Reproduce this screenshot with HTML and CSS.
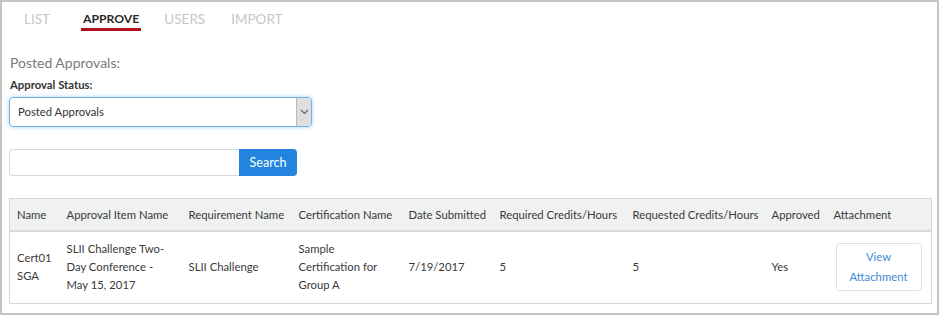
FILE: index.html
```html
<!DOCTYPE html>
<html>
<head>
<meta charset="utf-8">
<link rel="stylesheet" href="styles.css">
</head>
<body>
<div class="frame">
  <nav class="tabs">
    <span class="tab tab-first">LIST</span>
    <span class="tab active">APPROVE</span>
    <span class="tab">USERS</span>
    <span class="tab">IMPORT</span>
  </nav>
  <h2 class="title">Posted Approvals:</h2>
  <label class="label">Approval Status:</label>
  <div class="select">
    <span class="select-text">Posted Approvals</span>
    <span class="select-arrow"><svg width="9" height="6" viewBox="0 0 9 6"><path d="M1 1 L4.5 4.5 L8 1" fill="none" stroke="#666" stroke-width="1.2"/></svg></span>
  </div>
  <div class="search">
    <div class="search-input"></div>
    <div class="search-btn">Search</div>
  </div>
  <table class="grid">
    <colgroup>
      <col style="width:50px"><col style="width:122px"><col style="width:110px"><col style="width:110px"><col style="width:91px"><col style="width:133px"><col style="width:139px"><col style="width:62px"><col style="width:105px">
    </colgroup>
    <thead>
      <tr>
        <th>Name</th><th>Approval Item Name</th><th>Requirement Name</th><th>Certification Name</th><th>Date Submitted</th><th>Required Credits/Hours</th><th>Requested Credits/Hours</th><th>Approved</th><th>Attachment</th>
      </tr>
    </thead>
    <tbody>
      <tr>
        <td>Cert01 SGA</td>
        <td>SLII Challenge Two-Day Conference - May 15, 2017</td>
        <td>SLII Challenge</td>
        <td>Sample Certification for Group A</td>
        <td>7/19/2017</td>
        <td>5</td>
        <td>5</td>
        <td>Yes</td>
        <td><div class="attach">View Attachment</div></td>
      </tr>
    </tbody>
  </table>
</div>
</body>
</html>
```
FILE: styles.css
```css
* { box-sizing: border-box; }
body {
  margin: 0;
  font-family: Lato, "Open Sans", sans-serif;
  color: #333;
  background: #fff;
}
.frame {
  width: 939px;
  height: 315px;
  border: 2px solid #c4c4c4;
  padding: 8px 7px 0 7px;
}
.tabs {
  display: flex;
  padding-left: 15px;
  height: 21px;
}
.tab {
  font-size: 13.5px;
  line-height: 18px;
  color: #c7c7c7;
  margin-right: 26px;
  height: 21px;
}
.tab-first {
  margin-right: 31px;
}
.tab.active {
  font-size: 12.2px;
  color: #2a2a2a;
  font-weight: 700;
  border-bottom: 3px solid #b0101c;
  padding: 0 2px;
  margin-right: 23px;
}
.title {
  margin: 23px 0 0 1px;
  font-size: 14px;
  font-weight: 400;
  color: #7a7a7a;
  line-height: 18px;
}
.label {
  display: block;
  margin: 6px 0 0 1px;
  font-size: 11.3px;
  font-weight: 700;
  color: #333;
  line-height: 14px;
}
.select {
  margin-top: 5px;
  width: 303px;
  height: 30px;
  border: 1px solid #72b1e6;
  border-radius: 4px;
  box-shadow: 0 0 4px rgba(102, 175, 233, 0.6);
  display: flex;
  align-items: stretch;
  overflow: hidden;
}
.select-text {
  flex: 1;
  font-size: 11.3px;
  line-height: 28px;
  padding-left: 8px;
  color: #333;
}
.select-arrow {
  width: 15px;
  background: #dedede;
  border-left: 1px solid #bbb;
  display: flex;
  align-items: center;
  justify-content: center;
}
.search {
  margin-top: 22px;
  display: flex;
  height: 27px;
}
.search-input {
  width: 230px;
  border: 1px solid #d8d8d8;
  border-right: none;
  border-radius: 4px 0 0 4px;
}
.search-btn {
  width: 58px;
  background: #2284de;
  color: #fff;
  font-size: 12.5px;
  line-height: 27px;
  text-align: center;
  border-radius: 0 4px 4px 0;
}
.grid {
  margin-top: 22px;
  border-collapse: collapse;
  table-layout: fixed;
  width: 922px;
  border: 1px solid #d6d6d6;
  font-size: 11.3px;
}
.grid th {
  background: #f0f1f1;
  font-weight: 400;
  color: #3a3a3a;
  text-align: left;
  height: 32px;
  padding: 0 0 0 7px;
  border-bottom: 2px solid #d9d9d9;
  white-space: nowrap;
}
.grid td {
  padding: 8px 8px 8px 7px;
  line-height: 18px;
  color: #3a3a3a;
  vertical-align: middle;
  height: 73px;
}
.attach {
  width: 86px;
  border: 1px solid #e0e0e0;
  border-radius: 3px;
  color: #3d8ad6;
  text-align: center;
  line-height: 20px;
  padding: 3px 0;
  margin-left: 2px;
}
```
